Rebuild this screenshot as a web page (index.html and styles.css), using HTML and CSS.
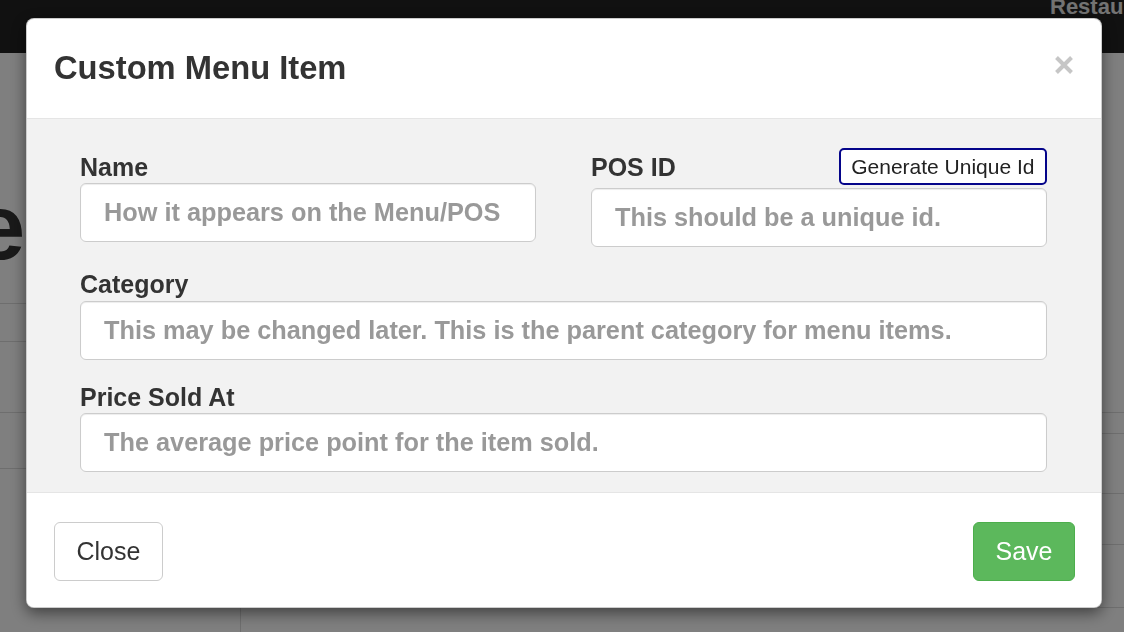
FILE: index.html
```html
<!DOCTYPE html>
<html lang="en">
<head>
<meta charset="utf-8">
<title>Custom Menu Item</title>
<link rel="stylesheet" href="styles.css">
</head>
<body>
<div class="page">
  <header class="navbar"><span class="brand">Restaurant Manager</span></header>
  <div class="page-body">
    <aside class="sidebar">
      <h1 class="page-title">e</h1>
      <ul class="side-list"><li></li><li></li><li></li></ul>
    </aside>
    <main class="main">
      <ul class="rows"><li></li><li></li><li></li><li></li></ul>
    </main>
  </div>
</div>
<div class="backdrop"></div>
<div class="modal">
  <div class="modal-header">
    <h4 class="modal-title">Custom Menu Item</h4>
    <button class="close" aria-label="Close">
      <svg width="18" height="18" viewBox="0 0 18 18"><path d="M1.5 1.5 L16.5 16.5 M16.5 1.5 L1.5 16.5" stroke="#c6c6c6" stroke-width="4" fill="none"/></svg>
    </button>
  </div>
  <div class="modal-body">
    <div class="form-row">
      <div class="form-group">
        <label class="field-label">Name</label>
        <input class="form-control" placeholder="How it appears on the Menu/POS">
      </div>
      <div class="form-group">
        <div class="field-head">
          <label class="field-label">POS ID</label>
          <button class="gen-btn">Generate Unique Id</button>
        </div>
        <input class="form-control" placeholder="This should be a unique id.">
      </div>
    </div>
    <div class="form-group">
      <label class="field-label">Category</label>
      <input class="form-control" placeholder="This may be changed later. This is the parent category for menu items.">
    </div>
    <div class="form-group last">
      <label class="field-label">Price Sold At</label>
      <input class="form-control" placeholder="The average price point for the item sold.">
    </div>
  </div>
  <div class="modal-footer">
    <button class="btn btn-default">Close</button>
    <button class="btn btn-success">Save</button>
  </div>
</div>
</body>
</html>
```
FILE: styles.css
```css
html, body {
  margin: 0;
  height: 632px;
  overflow: hidden;
}
body {
  font-family: "Liberation Sans", Arial, sans-serif;
  background: #fff;
  color: #333;
}

/* underlying page */
.navbar {
  height: 53px;
  background: #222;
  display: flex;
  align-items: flex-start;
  padding-left: 1050px;
  overflow: hidden;
  white-space: nowrap;
}
.brand {
  font-weight: 700;
  font-size: 22px;
  line-height: 22px;
  color: #e6e6e6;
  margin-top: -4px;
}
.page-body {
  display: flex;
  height: 579px;
}
.sidebar {
  width: 240px;
  flex: none;
  border-right: 1px solid #ddd;
}
.page-title {
  margin: 128px 0 0 -26px;
  font-size: 92px;
  line-height: 92px;
  font-weight: 700;
  color: #333;
}
.side-list, .rows {
  list-style: none;
  margin: 0;
  padding: 0;
  border-bottom: 1px solid #ddd;
}
.side-list {
  margin-top: 30px;
}
.side-list li, .rows li {
  border-top: 1px solid #ddd;
  box-sizing: border-box;
}
.side-list li:nth-child(1) { height: 38px; }
.side-list li:nth-child(2) { height: 71px; }
.side-list li:nth-child(3) { height: 56px; }
.main {
  flex: 1;
  padding-top: 359px;
}
.rows li:nth-child(1) { height: 21px; }
.rows li:nth-child(2) { height: 60px; }
.rows li:nth-child(3) { height: 51px; }
.rows li:nth-child(4) { height: 63px; }

.backdrop {
  position: fixed;
  inset: 0;
  background: rgba(0, 0, 0, 0.5);
}

/* modal */
.modal {
  position: fixed;
  left: 26px;
  top: 18px;
  width: 1076px;
  box-sizing: border-box;
  background: #fff;
  border: 1px solid rgba(0, 0, 0, 0.2);
  border-radius: 8px;
  box-shadow: 0 5px 15px rgba(0, 0, 0, 0.5);
  overflow: hidden;
}
.modal-header {
  display: flex;
  justify-content: space-between;
  align-items: flex-start;
  padding: 32px 28px 33px 27px;
  border-bottom: 1px solid #e5e5e5;
}
.modal-title {
  margin: 0;
  font-size: 32.7px;
  line-height: 34px;
  font-weight: 700;
  color: #333;
}
.close {
  width: 18px;
  height: 18px;
  margin-top: 5px;
  padding: 0;
  border: 0;
  background: none;
  display: block;
}
.close svg {
  display: block;
}
.modal-body {
  background: #f2f2f2;
  padding: 32.5px 54px 20px 53px;
}
.form-row {
  display: grid;
  grid-template-columns: 1fr 1fr;
  column-gap: 55px;
}
.form-group {
  margin-bottom: 22px;
}
.form-group.last {
  margin-bottom: 0;
}
.field-label {
  display: block;
  font-size: 25px;
  line-height: 30px;
  font-weight: 700;
  color: #333;
  margin-bottom: 1.5px;
}
.field-head {
  display: flex;
  justify-content: space-between;
  align-items: flex-start;
  margin-bottom: 3px;
}
.field-head .field-label {
  margin-bottom: 0;
}
.gen-btn {
  margin-top: -3.5px;
  height: 37px;
  box-sizing: border-box;
  border: 2px solid #05058a;
  border-radius: 5px;
  background: #fff;
  color: #222;
  font: 400 21px/33px "Liberation Sans", Arial, sans-serif;
  padding: 0 10.5px;
}
.form-control {
  display: block;
  width: 100%;
  box-sizing: border-box;
  height: 59px;
  margin: 0;
  padding: 0 22px 0 23px;
  border: 1px solid #ccc;
  border-radius: 6px;
  background: #fff;
  font: 700 25.3px "Liberation Sans", Arial, sans-serif;
  color: #555;
  box-shadow: inset 0 1px 1px rgba(0, 0, 0, 0.075);
  outline: none;
}
.form-control::placeholder {
  color: #999;
  opacity: 1;
}
.modal-footer {
  display: flex;
  justify-content: space-between;
  padding: 29px 26px 26px 27px;
  border-top: 1px solid #e5e5e5;
  background: #fff;
}
.btn {
  height: 59px;
  box-sizing: border-box;
  padding: 0 21.5px;
  font: 400 25px/57px "Liberation Sans", Arial, sans-serif;
  border-radius: 6px;
  border: 1px solid;
}
.btn-default {
  background: #fff;
  border-color: #ccc;
  color: #333;
}
.btn-success {
  background: #5cb85c;
  border-color: #4cae4c;
  color: #fff;
}
```
